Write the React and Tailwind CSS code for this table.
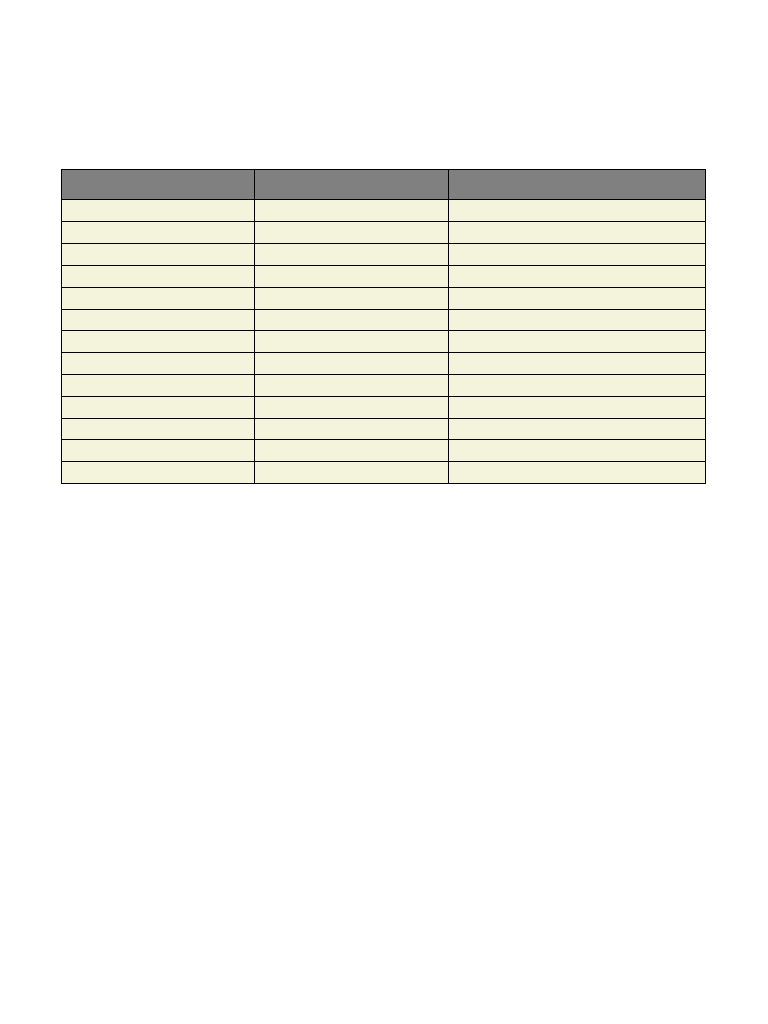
import React from 'react';

// a couple of rows are a pixel shorter, as in the reference
const rowHeights = [22, 22, 22, 22, 22, 21, 22, 22, 22, 22, 21, 22, 22];

export default function App() {
  return (
    <div className="min-h-screen bg-white pt-[169px] pl-[61px]" style={{ fontFamily: 'Liberation Sans, Arial, sans-serif' }}>
      <div className="w-[645px] border-l border-t border-black">
        {/* header */}
        <div className="grid grid-cols-[193px_194px_257px] bg-[#808080]">
          <div className="h-[30px] border-r border-b border-black" />
          <div className="h-[30px] border-r border-b border-black" />
          <div className="h-[30px] border-r border-b border-black" />
        </div>
        {rowHeights.map((h, i) => (
          <div key={i} className={`grid grid-cols-[193px_194px_257px] bg-[#f4f4dc] ${h === 21 ? 'h-[21px]' : 'h-[22px]'}`}>
            <div className="border-r border-b border-black" />
            <div className="border-r border-b border-black" />
            <div className="border-r border-b border-black" />
          </div>
        ))}
      </div>
    </div>
  );
}
